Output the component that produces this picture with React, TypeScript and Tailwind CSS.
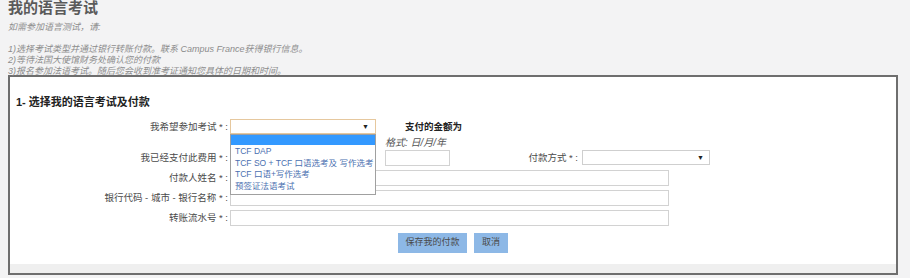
const FONT = "font-['Liberation_Sans','Noto_Sans_CJK_SC',sans-serif]";

function Arrow() {
  return <span className="text-[7px] leading-none text-[#222]">▼</span>;
}

function Label({ children }: { children: React.ReactNode }) {
  return (
    <div className="w-[220px] shrink-0 text-right text-[9.5px] leading-[16px] text-[#4a4a4a] pr-[2px]">
      {children}
    </div>
  );
}

function TextInput({ w = "w-[439px]" }: { w?: string }) {
  return <div className={`${w} h-[16px] border border-[#d2d2d2] bg-white`} />;
}

const OPTIONS = [
  "TCF DAP",
  "TCF SO + TCF 口语选考及 写作选考",
  "TCF 口语+写作选考",
  "预签证法语考试",
];

export default function App() {
  return (
    <div className={`${FONT} w-[910px] h-[278px] overflow-hidden bg-[#f3f3f4]`}>
      {/* Intro */}
      <div className="pl-[8px]">
        <h1 className="text-[15px] leading-[16px] font-bold text-[#5a5a5a]">我的语言考试</h1>
      </div>
      <div className="pl-[8px] pt-[6px] text-[9px] leading-[11px] italic text-[#8c8c8c]">
        <p>如需参加语言测试，请:</p>
        <p>&nbsp;</p>
        <p>1)选择考试类型并通过银行转账付款。联系 Campus France获得银行信息。</p>
        <p>2)等待法国大使馆财务处确认您的付款</p>
        <p>3)报名参加法语考试。随后您会收到准考证通知您具体的日期和时间。</p>
      </div>

      {/* Panel */}
      <div className="ml-[8px] -mt-[2px] w-[890px] h-[200px] border-2 border-[#6e6e6e] bg-white flex flex-col">
        <div className="pl-[6px] pt-[18px]">
          <h2 className="text-[11px] leading-[14px] font-bold text-[#222]">1- 选择我的语言考试及付款</h2>
        </div>

        <div className="mt-[10px] flex flex-col">
          {/* Row 1 */}
          <div className="flex items-start h-[16px]">
            <Label>我希望参加考试 * :</Label>
            <div className="relative">
              <div className="w-[146px] h-[15px] border border-[#e6c89e] bg-white flex items-center justify-end pr-[6px]">
                <Arrow />
              </div>
              <div className="absolute left-0 top-[15px] w-[146px] border border-[#a0a0a0] bg-white z-10">
                <div className="h-[10px] bg-[#3399ff]" />
                <div className="pt-[1px] pb-[2px] pl-[4px] text-[8.5px] leading-[11.5px] text-[#4a6fb0]">
                  {OPTIONS.map((o) => (
                    <div key={o} className="whitespace-nowrap">{o}</div>
                  ))}
                </div>
              </div>
            </div>
            <div className="ml-[29px] text-[9.5px] leading-[16px] font-bold text-[#222]">支付的金额为</div>
          </div>

          {/* format hint */}
          <div className="h-[15px] pl-[375px] text-[10px] leading-[15px] italic text-[#555]">格式: 日/月/年</div>

          {/* Row 2 */}
          <div className="flex items-start h-[16px]">
            <Label>我已经支付此费用 * :</Label>
            <div className="w-[155px]" />
            <TextInput w="w-[65px]" />
            <div className="w-[132px] text-right text-[9.5px] leading-[16px] text-[#4a4a4a] pr-[4px]">付款方式 * :</div>
            <div className="w-[128px] h-[15px] border border-[#cfcfcf] bg-white flex items-center justify-end pr-[5px]">
              <Arrow />
            </div>
          </div>

          <div className="mt-[4px] flex items-start h-[16px]">
            <Label>付款人姓名 * :</Label>
            <TextInput />
          </div>
          <div className="mt-[4px] flex items-start h-[16px]">
            <Label>银行代码 - 城市 - 银行名称 * :</Label>
            <TextInput />
          </div>
          <div className="mt-[4px] flex items-start h-[16px]">
            <Label>转账流水号 * :</Label>
            <TextInput />
          </div>

          {/* Buttons */}
          <div className="mt-[7px] flex pl-[388px] gap-[7px]">
            <button className="h-[20px] w-[69px] bg-[#8db8e6] text-[9px] text-[#4a4a4a]">保存我的付款</button>
            <button className="h-[20px] w-[34px] bg-[#8db8e6] text-[9px] text-[#4a4a4a]">取消</button>
          </div>
        </div>

        <div className="mt-auto h-[9px] bg-[#efefef]" />
      </div>
    </div>
  );
}
